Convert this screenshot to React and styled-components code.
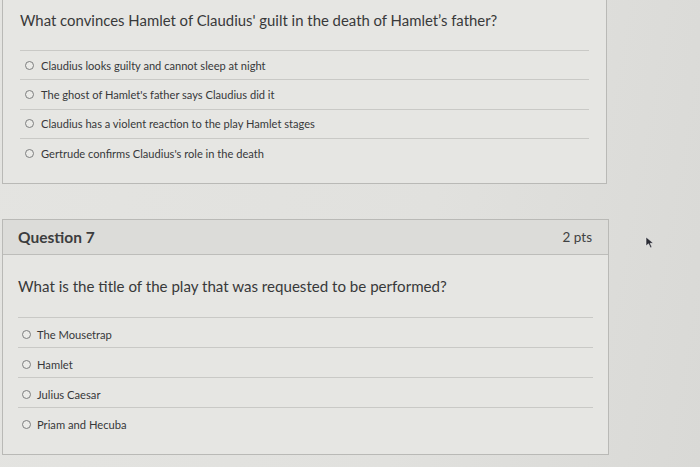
import React from 'react';
import styled, { createGlobalStyle } from 'styled-components';

const GlobalStyle = createGlobalStyle`
  html, body {
    margin: 0;
    padding: 0;
    background: #dfdfdc;
    font-family: Lato, "Open Sans", sans-serif;
    color: #3a3b3c;
  }
`;

const Page = styled.div`
  position: relative;
  width: 700px;
  height: 467px;
  overflow: hidden;
  padding-left: 2px;
  box-sizing: border-box;
  background: linear-gradient(100deg, #e4e4e1 0%, #e1e1de 60%, #d9d9d6 100%);
  display: flex;
  flex-direction: column;
  gap: 35px;
`;

const Card = styled.div`
  width: ${p => p.$width}px;
  box-sizing: border-box;
  border: 1px solid #b9b9b6;
  border-top: ${p => (p.$open ? 'none' : '1px solid #b9b9b6')};
  background: #e6e6e3;
`;

const Header = styled.div`
  height: 34px;
  display: flex;
  align-items: center;
  justify-content: space-between;
  padding: 0 16px 0 15px;
  background: #dcdcd9;
  border-bottom: 1px solid #bdbdba;
`;

const HeaderTitle = styled.div`
  font-size: 15.5px;
  font-weight: 700;
  color: #3c3d3e;
`;

const Points = styled.div`
  font-size: 13.5px;
  color: #404142;
`;

const Body = styled.div`
  padding: ${p => p.$pad};
`;

const QuestionText = styled.div`
  font-size: ${p => p.$size}px;
  line-height: 20px;
  color: #38393a;
  margin-bottom: ${p => p.$gap}px;
`;

const Answers = styled.div`
  margin: 0 ${p => p.$right}px 0 ${p => p.$left}px;
`;

const Answer = styled.label`
  display: flex;
  align-items: center;
  gap: ${p => p.$gap}px;
  box-sizing: border-box;
  height: ${p => p.$h}px;
  border-top: 1px solid #c9c9c6;
  padding-left: ${p => p.$indent}px;
  padding-top: ${p => p.$lift}px;
  font-size: ${p => p.$size}px;
  color: #37383a;
`;

const Radio = styled.span`
  width: 7px;
  height: 7px;
  border-radius: 50%;
  border: 1.3px solid #7d7e7f;
  background: #ebebe8;
  flex: none;
`;

const Cursor = styled.svg`
  position: absolute;
  left: 645px;
  top: 236px;
`;

const q6 = [
  'Claudius looks guilty and cannot sleep at night',
  "The ghost of Hamlet's father says Claudius did it",
  'Claudius has a violent reaction to the play Hamlet stages',
  "Gertrude confirms Claudius's role in the death",
];

const q7 = ['The Mousetrap', 'Hamlet', 'Julius Caesar', 'Priam and Hecuba'];

export default function App() {
  return (
    <Page>
      <GlobalStyle />
      <Card $width={605} $open>
        <Body $pad="10px 0 15px 17px">
          <QuestionText $size={14.9} $gap={20}>
            What convinces Hamlet of Claudius' guilt in the death of Hamlet’s father?
          </QuestionText>
          <Answers $left={0} $right={17}>
            {q6.map(a => (
              <Answer key={a} $h={29.4} $indent={5} $gap={7} $lift={0} $size={11.1}>
                <Radio />
                {a}
              </Answer>
            ))}
          </Answers>
        </Body>
      </Card>

      <Card $width={607}>
        <Header>
          <HeaderTitle>Question 7</HeaderTitle>
          <Points>2 pts</Points>
        </Header>
        <Body $pad="21px 0 17px 15px">
          <QuestionText $size={15.1} $gap={21}>
            What is the title of the play that was requested to be performed?
          </QuestionText>
          <Answers $left={0} $right={15}>
            {q7.map(a => (
              <Answer key={a} $h={30} $indent={4} $gap={6} $lift={4} $size={11.2}>
                <Radio />
                {a}
              </Answer>
            ))}
          </Answers>
        </Body>
      </Card>

      <Cursor width="10" height="13" viewBox="0 0 10 13">
        <path d="M1 1 L1 10 L3.5 7.8 L5.5 12 L7 11.3 L5.2 7.3 L8.5 7.3 Z" fill="#2a2b33" stroke="#f0f0f0" strokeWidth="0.6" />
      </Cursor>
    </Page>
  );
}
